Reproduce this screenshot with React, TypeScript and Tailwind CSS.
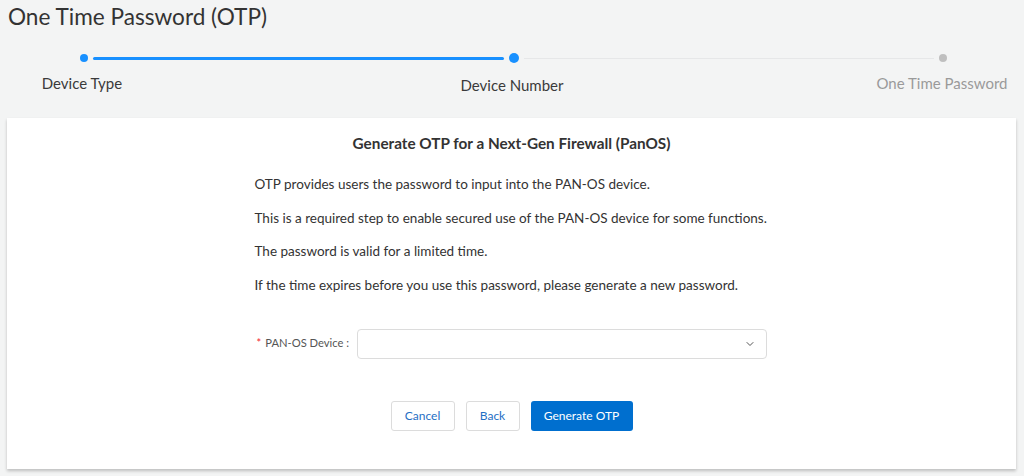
import { ChevronDown } from "lucide-react";

const lines = [
  "OTP provides users the password to input into the PAN-OS device.",
  "This is a required step to enable secured use of the PAN-OS device for some functions.",
  "The password is valid for a limited time.",
  "If the time expires before you use this password, please generate a new password.",
];

function Stepper() {
  return (
    <div>
      <div className="mt-[21px] flex items-center pl-[80px] pr-[77px]">
        <span className="h-[8px] w-[8px] rounded-full bg-[#1890ff]" />
        <span className="mx-[5px] h-[3px] flex-1 rounded-full bg-[#1890ff]" />
        <span className="h-[10px] w-[10px] rounded-full bg-[#1890ff]" />
        <span className="mx-[5px] h-px flex-1 bg-[#e6e7e8]" />
        <span className="h-[8px] w-[8px] rounded-full bg-[#bfbfbf]" />
      </div>
      <div className="mt-[10px] flex justify-between pl-[12px] pr-[12px] text-[15px] leading-[20px]">
        <span className="w-[140px] text-center text-[#3a3a3a]">Device Type</span>
        <span className="mt-[2px] w-[140px] text-center text-[#3a3a3a]">Device Number</span>
        <span className="w-[140px] text-center text-[#9a9a9a]">One Time Password</span>
      </div>
    </div>
  );
}

export default function App() {
  return (
    <div className="min-h-[476px] bg-[#f3f4f4] pb-[8px] font-['Lato','Open_Sans',sans-serif] text-[#333]">
      <h1 className="pl-[8px] pt-[2px] text-[22.6px] leading-[30px] text-[#333]">One Time Password (OTP)</h1>
      <Stepper />
      <div className="ml-[7px] mr-[8px] mt-[23px] bg-white pb-[38px] pt-[15px] shadow-[0_2px_3px_rgba(0,0,0,0.22)]">
        <h2 className="text-center text-[15.3px] font-bold leading-[20px] text-[#333]">
          Generate OTP for a Next-Gen Firewall (PanOS)
        </h2>
        <div className="mx-auto mt-[21px] w-[514px] text-[13.5px] leading-[21px] text-[#333]">
          {lines.map((l) => (
            <p key={l} className="mb-[12.5px] whitespace-nowrap">
              {l}
            </p>
          ))}
        </div>
        <div className="mx-auto mt-[33px] flex w-[510px] items-center gap-[8px]">
          <label className="whitespace-nowrap text-[11.2px] text-[#555]">
            <span className="mr-[4px] text-[#f5222d]">*</span>PAN-OS Device :
          </label>
          <div className="flex h-[30px] flex-1 items-center justify-end rounded-[4px] border border-[#dcdcdc] bg-white pr-[10px]">
            <ChevronDown className="h-[12px] w-[12px] text-[#555]" strokeWidth={2} />
          </div>
        </div>
        <div className="mt-[42px] flex justify-center gap-[11px] text-[12px]">
          <button className="h-[30px] w-[64px] rounded-[3px] border border-[#dcdcdc] bg-white text-[#1f6fc4]">Cancel</button>
          <button className="h-[30px] w-[54px] rounded-[3px] border border-[#dcdcdc] bg-white text-[#1f6fc4]">Back</button>
          <button className="h-[30px] w-[102px] rounded-[3px] bg-[#006fcf] text-white">Generate OTP</button>
        </div>
      </div>
    </div>
  );
}
